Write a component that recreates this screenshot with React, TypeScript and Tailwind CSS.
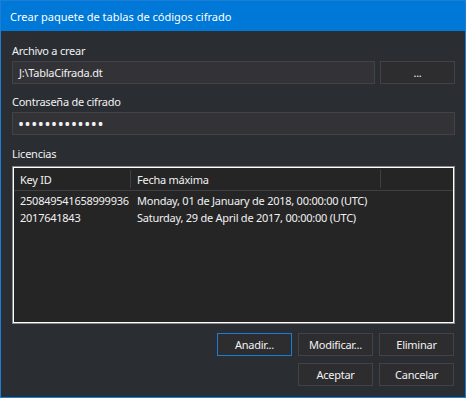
import React from 'react';

const rows = [
  { id: '250849541658999936', fecha: 'Monday, 01 de January de 2018, 00:00:00 (UTC)' },
  { id: '2017641843', fecha: 'Saturday, 29 de April de 2017, 00:00:00 (UTC)' },
];

function Btn({ label, focused }: { label: string; focused?: boolean }) {
  return (
    <button
      className={
        'w-[75px] h-[23px] bg-[#2d2d30] text-[#f1f1f1] border ' +
        (focused ? 'border-[#1c7bd4]' : 'border-[#434346]')
      }
    >
      {label}
    </button>
  );
}

export default function App() {
  return (
    <div
      className="w-[466px] h-[398px] border border-[#1c7ed6] bg-[#2a2d32] text-[#f1f1f1] flex flex-col text-[11px] tracking-[-0.25px] leading-none"
      style={{ fontFamily: '"Noto Sans", sans-serif' }}
    >
      <div className="h-[30px] bg-[#0078d7] text-white flex items-center pl-[9px] text-[11px] tracking-normal">
        Crear paquete de tablas de códigos cifrado
      </div>

      <div className="flex flex-col pl-[11px] pr-[10px]">
        <div className="mt-[12px] h-[14px] flex items-center">Archivo a crear</div>
        <div className="mt-[4px] flex gap-[5px]">
          <div className="flex-1 h-[23px] bg-[#333337] border border-[#434346] flex items-center pl-[6px]">
            J:\TablaCifrada.dt
          </div>
          <button className="w-[75px] h-[23px] bg-[#2d2d30] border border-[#434346] text-[#f1f1f1]">...</button>
        </div>

        <div className="mt-[10px] h-[14px] flex items-center">Contraseña de cifrado</div>
        <div className="mt-[4px] h-[23px] bg-[#333337] border border-[#434346] flex items-center pl-[5px] text-[16px] tracking-[0.6px]">
          •••••••••••••
        </div>

        <div className="mt-[11px] h-[14px] flex items-center">Licencias</div>
        <div className="mt-[6px] h-[158px] border border-[#8a8a8a]">
          <div className="h-full border border-white bg-[#252526] flex flex-col">
            <div className="h-[23px] flex border-b border-[#3f3f46]">
              <div className="w-[117px] flex items-center pl-[6px] border-r border-[#3f3f46] my-[2px]">Key ID</div>
              <div className="w-[250px] flex items-center pl-[6px] border-r border-[#3f3f46] my-[2px]">
                Fecha máxima
              </div>
            </div>
            <div className="pt-[1px]">
              {rows.map((r) => (
                <div key={r.id} className="h-[17px] flex items-center">
                  <div className="w-[117px] pl-[6px] whitespace-nowrap">{r.id}</div>
                  <div className="pl-[6px] whitespace-nowrap">{r.fecha}</div>
                </div>
              ))}
            </div>
          </div>
        </div>

        <div className="mt-[9px] flex justify-end gap-[6px] pr-[1px]">
          <Btn label="Anadir..." focused />
          <Btn label="Modificar..." />
          <Btn label="Eliminar" />
        </div>
        <div className="mt-[7px] flex justify-end gap-[6px] pr-[1px]">
          <Btn label="Aceptar" />
          <Btn label="Cancelar" />
        </div>
      </div>
    </div>
  );
}
